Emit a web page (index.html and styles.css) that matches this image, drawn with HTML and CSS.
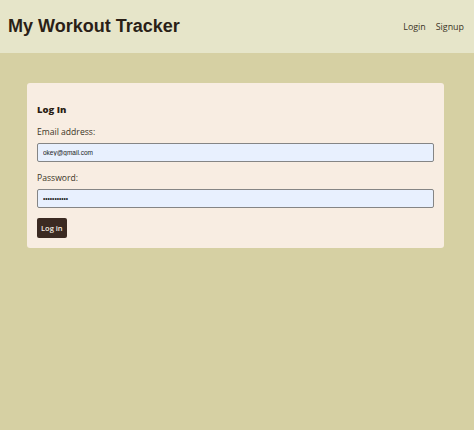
FILE: index.html
```html
<!DOCTYPE html>
<html lang="en">
<head>
    <meta charset="UTF-8">
    <title>My Workout Tracker</title>
    <meta name="viewport" content="width=device-width, initial-scale=1">
    <link rel="stylesheet" href="styles.css">
</head>
<body>
    <header class="topbar">
        <h1 class="brand">My Workout Tracker</h1>
        <nav class="nav">
            <a href="#">Login</a>
            <a href="#">Signup</a>
        </nav>
    </header>
    <main class="page">
        <form class="login-card">
            <h3>Log In</h3>
            <label for="email">Email address:</label>
            <input type="email" id="email" value="okey@gmail.com">
            <label for="password">Password:</label>
            <input type="password" id="password" value="okeyokeyoke">
            <button class="btn" type="button">Log in</button>
        </form>
    </main>
</body>
</html>
```

FILE: styles.css
```css
body {
    margin: 0;
    padding: 0;
    background: #d6d0a3;
    font-family: "Open Sans", Arial, sans-serif;
    color: #2b1d14;
    min-height: 430px;
}
.topbar {
    background: #e6e5c9;
    height: 53px;
    display: flex;
    align-items: center;
    justify-content: space-between;
    padding: 0 10px 0 8px;
}
.brand {
    margin: 0;
    font-family: "Liberation Sans", Arial, sans-serif;
    font-size: 18px;
    font-weight: 700;
    color: #2a1f17;
}
.nav {
    display: flex;
    gap: 10px;
}
.nav a {
    color: #3b3426;
    text-decoration: none;
    font-size: 8.9px;
}
.page {
    padding: 30px 30px 0 27px;
}
.login-card {
    background: #f8ede2;
    border-radius: 3px;
    padding: 20px 10px 10px 10px;
    display: flex;
    flex-direction: column;
    align-items: flex-start;
}
.login-card h3 {
    margin: 0 0 10px 0;
    font-size: 9.5px;
    font-weight: 800;
}
.login-card label {
    font-size: 8.6px;
    color: #3b3426;
    margin-bottom: 5px;
}
.login-card input {
    box-sizing: border-box;
    width: 100%;
    height: 19px;
    margin: 0 0 10px 0;
    padding: 0 5px;
    background: #e8f0fe;
    border: 1px solid #858585;
    border-radius: 2px;
    font-family: Arial, sans-serif;
    font-size: 6.5px;
    color: #222;
}
.btn {
    margin-top: 0;
    background: #3b2a22;
    color: #f3ece2;
    border: none;
    border-radius: 2px;
    padding: 0 4px;
    height: 20px;
    font-family: "Open Sans", Arial, sans-serif;
    font-size: 7.5px;
    font-weight: 600;
}
```
